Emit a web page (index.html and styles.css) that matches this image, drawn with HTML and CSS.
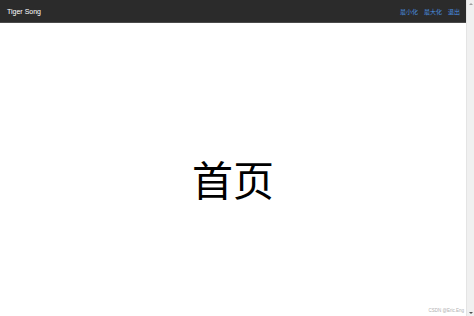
FILE: index.html
```html
<!DOCTYPE html>
<html>
<head>
<meta charset="utf-8">
<link rel="stylesheet" href="styles.css">
</head>
<body>
<div class="frame">
  <div class="page">
    <header class="topbar">
      <span class="brand">Tiger Song</span>
      <nav class="actions">
        <a class="act">最小化</a>
        <a class="act">最大化</a>
        <a class="act">退出</a>
      </nav>
    </header>
    <main class="content">
      <h1 class="title">首页</h1>
    </main>
    <div class="mark">CSDN @Eric.Eng</div>
  </div>
  <div class="scrollbar">
    <span class="arrow up"></span>
    <span class="track"></span>
    <span class="arrow down"></span>
  </div>
</div>
</body>
</html>
```
FILE: styles.css
```css
html, body {
  margin: 0;
  padding: 0;
  height: 100%;
  background: #ffffff;
  font-family: "Noto Sans", "Noto Sans CJK SC", sans-serif;
}
.frame {
  display: flex;
  height: 316px;
  width: 474px;
  overflow: hidden;
}
.page {
  flex: 1;
  display: flex;
  flex-direction: column;
  position: relative;
}
.topbar {
  height: 22px;
  background: #2b2b2b;
  border-bottom: 1px solid #4a4a4a;
  display: flex;
  align-items: center;
  justify-content: space-between;
  padding: 0 6px 0 7px;
}
.brand {
  color: #ffffff;
  font-size: 7px;
  font-family: "Liberation Sans", "Noto Sans", sans-serif;
}
.actions {
  display: flex;
  gap: 6px;
}
.act {
  color: #4a8fe0;
  font-size: 6px;
  font-family: "Noto Sans CJK SC", sans-serif;
}
.content {
  flex: 1;
  display: flex;
  align-items: center;
  justify-content: center;
}
.title {
  margin: 0;
  font-weight: normal;
  font-size: 41px;
  line-height: 1;
  color: #000;
  font-family: "Noto Sans CJK SC", sans-serif;
  transform: translateY(9px);
}
.mark {
  position: absolute;
  right: 2px;
  bottom: 3px;
  font-size: 4.5px;
  color: #b0b0b0;
  font-family: "Liberation Sans", sans-serif;
}
.scrollbar {
  width: 7px;
  background: #f0f0f0;
  display: flex;
  flex-direction: column;
  border-left: 1px solid #e4e4e4;
}
.track { flex: 1; }
.arrow {
  height: 7px;
  display: flex;
  align-items: center;
  justify-content: center;
}
.arrow::after {
  content: "";
  width: 0;
  height: 0;
  border-left: 2px solid transparent;
  border-right: 2px solid transparent;
}
.up::after { border-bottom: 2px solid #a0a0a0; }
.down::after { border-top: 2px solid #505050; }
```
